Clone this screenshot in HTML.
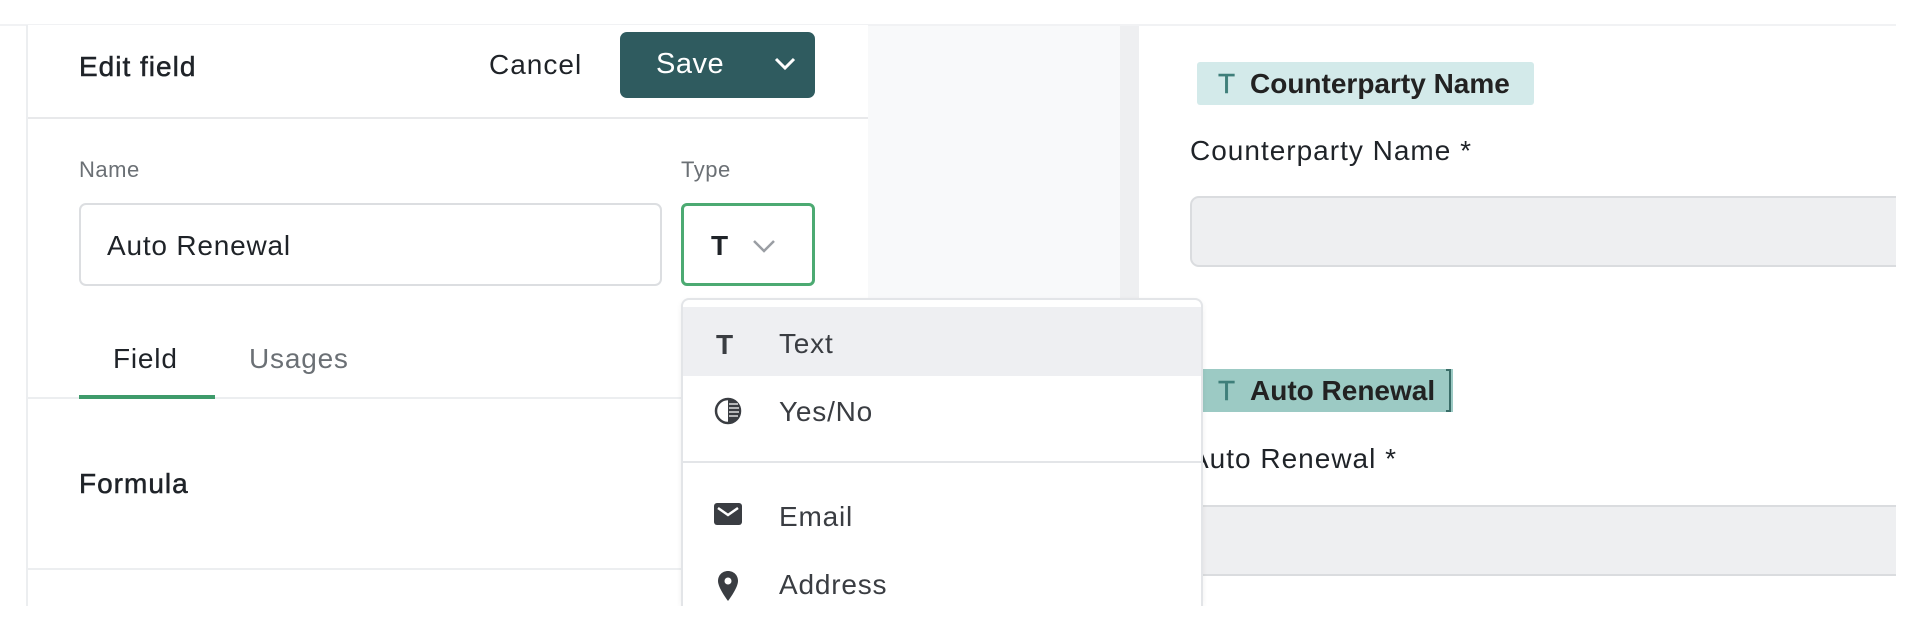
<!DOCTYPE html>
<html><head><meta charset="utf-8"><style>
*{box-sizing:border-box;margin:0;padding:0}
body{width:1930px;height:644px;background:#fff;font-family:"Liberation Sans",sans-serif;color:#1f2328;position:relative;overflow:hidden}
.a{position:absolute}
.t{position:absolute;white-space:nowrap;line-height:1;letter-spacing:.5px}
.m{-webkit-text-stroke:.5px currentColor;letter-spacing:1px}
</style></head><body>
<div class="a" style="left:0;top:24px;width:1896px;height:2px;background:#f1f2f4"></div>
<!-- left panel -->
<div class="a" style="left:26px;top:25px;width:842px;height:581px;border-left:2px solid #eceef0;background:#fff"></div>
<div class="a" style="left:28px;top:117px;width:840px;height:2px;background:#e8e9eb"></div>
<div class="t m" style="left:79px;top:53px;font-size:28px">Edit field</div>
<div class="t" style="left:489px;top:51px;font-size:28px;letter-spacing:1px">Cancel</div>
<div class="a" style="left:620px;top:32px;width:195px;height:66px;background:#2f5b5f;border-radius:7px"></div>
<div class="t" style="left:656px;top:50px;font-size:29px;color:#fff">Save</div>
<svg class="a" style="left:773px;top:56px" width="24" height="16" viewBox="0 0 24 16"><path d="M3 3l9 9 9-9" fill="none" stroke="#fff" stroke-width="3"/></svg>
<div class="t" style="left:79px;top:159px;font-size:22px;color:#6b7075">Name</div>
<div class="t" style="left:681px;top:159px;font-size:22px;color:#6b7075">Type</div>
<div class="a" style="left:79px;top:203px;width:583px;height:83px;border:2px solid #dcdee1;border-radius:7px"></div>
<div class="t" style="left:107px;top:232px;font-size:28px;letter-spacing:.8px">Auto Renewal</div>
<div class="a" style="left:681px;top:203px;width:134px;height:83px;border:3px solid #4caa72;border-radius:6px"></div>
<div class="t" style="left:711px;top:232px;font-size:28px;font-weight:bold">T</div>
<svg class="a" style="left:751px;top:238px" width="26" height="16" viewBox="0 0 26 16"><path d="M3 3l10 10 10-10" fill="none" stroke="#9a9ea3" stroke-width="2.5"/></svg>
<div class="t" style="left:113px;top:345px;font-size:28px;letter-spacing:.8px">Field</div>
<div class="t" style="left:249px;top:345px;font-size:28px;color:#6b7075;letter-spacing:.8px">Usages</div>
<div class="a" style="left:28px;top:397px;width:840px;height:2px;background:#eceef0"></div>
<div class="a" style="left:79px;top:395px;width:136px;height:4px;background:#3e9b6b"></div>
<div class="t m" style="left:79px;top:470px;font-size:28px">Formula</div>
<div class="a" style="left:28px;top:568px;width:840px;height:2px;background:#eceef0"></div>
<!-- gray column -->
<div class="a" style="left:868px;top:26px;width:252px;height:580px;background:#f8f9fa"></div>
<div class="a" style="left:1120px;top:26px;width:19px;height:580px;background:#eeeff1"></div>
<!-- right content -->
<div class="a" style="left:1197px;top:62px;width:337px;height:43px;background:#d3eaea;border-radius:3px"></div>
<div class="t" style="left:1218px;top:70px;font-size:28px;color:#3f7f7a;-webkit-text-stroke:.4px #3f7f7a">T</div>
<div class="t" style="left:1250px;top:70px;font-size:28px;font-weight:bold;letter-spacing:0;color:#222">Counterparty Name</div>
<div class="t" style="left:1190px;top:137px;font-size:28px;letter-spacing:1px">Counterparty Name *</div>
<div class="a" style="left:1190px;top:196px;width:720px;height:71px;background:#eeeff1;border:2px solid #dadcdf;border-radius:9px"></div>
<div class="a" style="left:1190px;top:369px;width:263px;height:43px;background:#9ccac4"></div>
<div class="a" style="left:1446px;top:369px;width:5px;height:43px;border:2px solid #3a6d68;border-left:none"></div>
<div class="t" style="left:1218px;top:377px;font-size:28px;color:#3f7f7a;-webkit-text-stroke:.4px #3f7f7a">T</div>
<div class="t" style="left:1250px;top:377px;font-size:28px;font-weight:bold;letter-spacing:0;color:#222">Auto Renewal</div>
<div class="t" style="left:1190px;top:445px;font-size:28px;letter-spacing:1px">Auto Renewal *</div>
<div class="a" style="left:1190px;top:505px;width:720px;height:71px;background:#eeeff1;border:2px solid #dadcdf;border-radius:9px"></div>
<div class="a" style="left:1896px;top:0;width:34px;height:644px;background:#fff"></div>
<!-- dropdown -->
<div class="a" style="left:681px;top:298px;width:522px;height:308px;background:#fff;border:2px solid #e3e5e8;border-bottom:none;border-radius:8px 8px 0 0;box-shadow:0 2px 6px rgba(0,0,0,.06)"></div>
<div class="a" style="left:683px;top:307px;width:518px;height:69px;background:#eeeff2"></div>
<div class="a" style="left:683px;top:461px;width:518px;height:2px;background:#e3e5e8"></div>
<div class="t" style="left:716px;top:331px;font-size:28px;font-weight:bold;color:#3a3d42">T</div>
<div class="t" style="left:779px;top:330px;font-size:28px;color:#3a3d42;letter-spacing:.8px">Text</div>
<svg class="a" style="left:713px;top:396px" width="30" height="30" viewBox="0 0 30 30"><circle cx="15" cy="15" r="12" fill="none" stroke="#3a3d42" stroke-width="2.5"/><path d="M15 3a12 12 0 0 1 0 24z" fill="#3a3d42"/><path d="M16 8h9M16 12h10M16 16h10M16 20h9" stroke="#fff" stroke-width="1.3"/></svg>
<div class="t" style="left:779px;top:398px;font-size:28px;color:#3a3d42;letter-spacing:.8px">Yes/No</div>
<svg class="a" style="left:713px;top:502px" width="30" height="24" viewBox="0 0 30 24"><rect x="1" y="1" width="28" height="22" rx="3" fill="#3a3d42"/><path d="M5 6l10 7 10-7" fill="none" stroke="#fff" stroke-width="2.5"/></svg>
<div class="t" style="left:779px;top:503px;font-size:28px;color:#3a3d42;letter-spacing:.8px">Email</div>
<svg class="a" style="left:716px;top:570px" width="24" height="32" viewBox="0 0 24 32"><path d="M12 1C6 1 2 5.5 2 11c0 7 10 20 10 20s10-13 10-20C22 5.5 18 1 12 1z" fill="#3a3d42"/><circle cx="12" cy="11" r="3.5" fill="#fff"/></svg>
<div class="t" style="left:779px;top:571px;font-size:28px;color:#3a3d42;letter-spacing:.8px">Address</div>
<div class="a" style="left:0;top:606px;width:1930px;height:38px;background:#fff"></div>
</body></html>
